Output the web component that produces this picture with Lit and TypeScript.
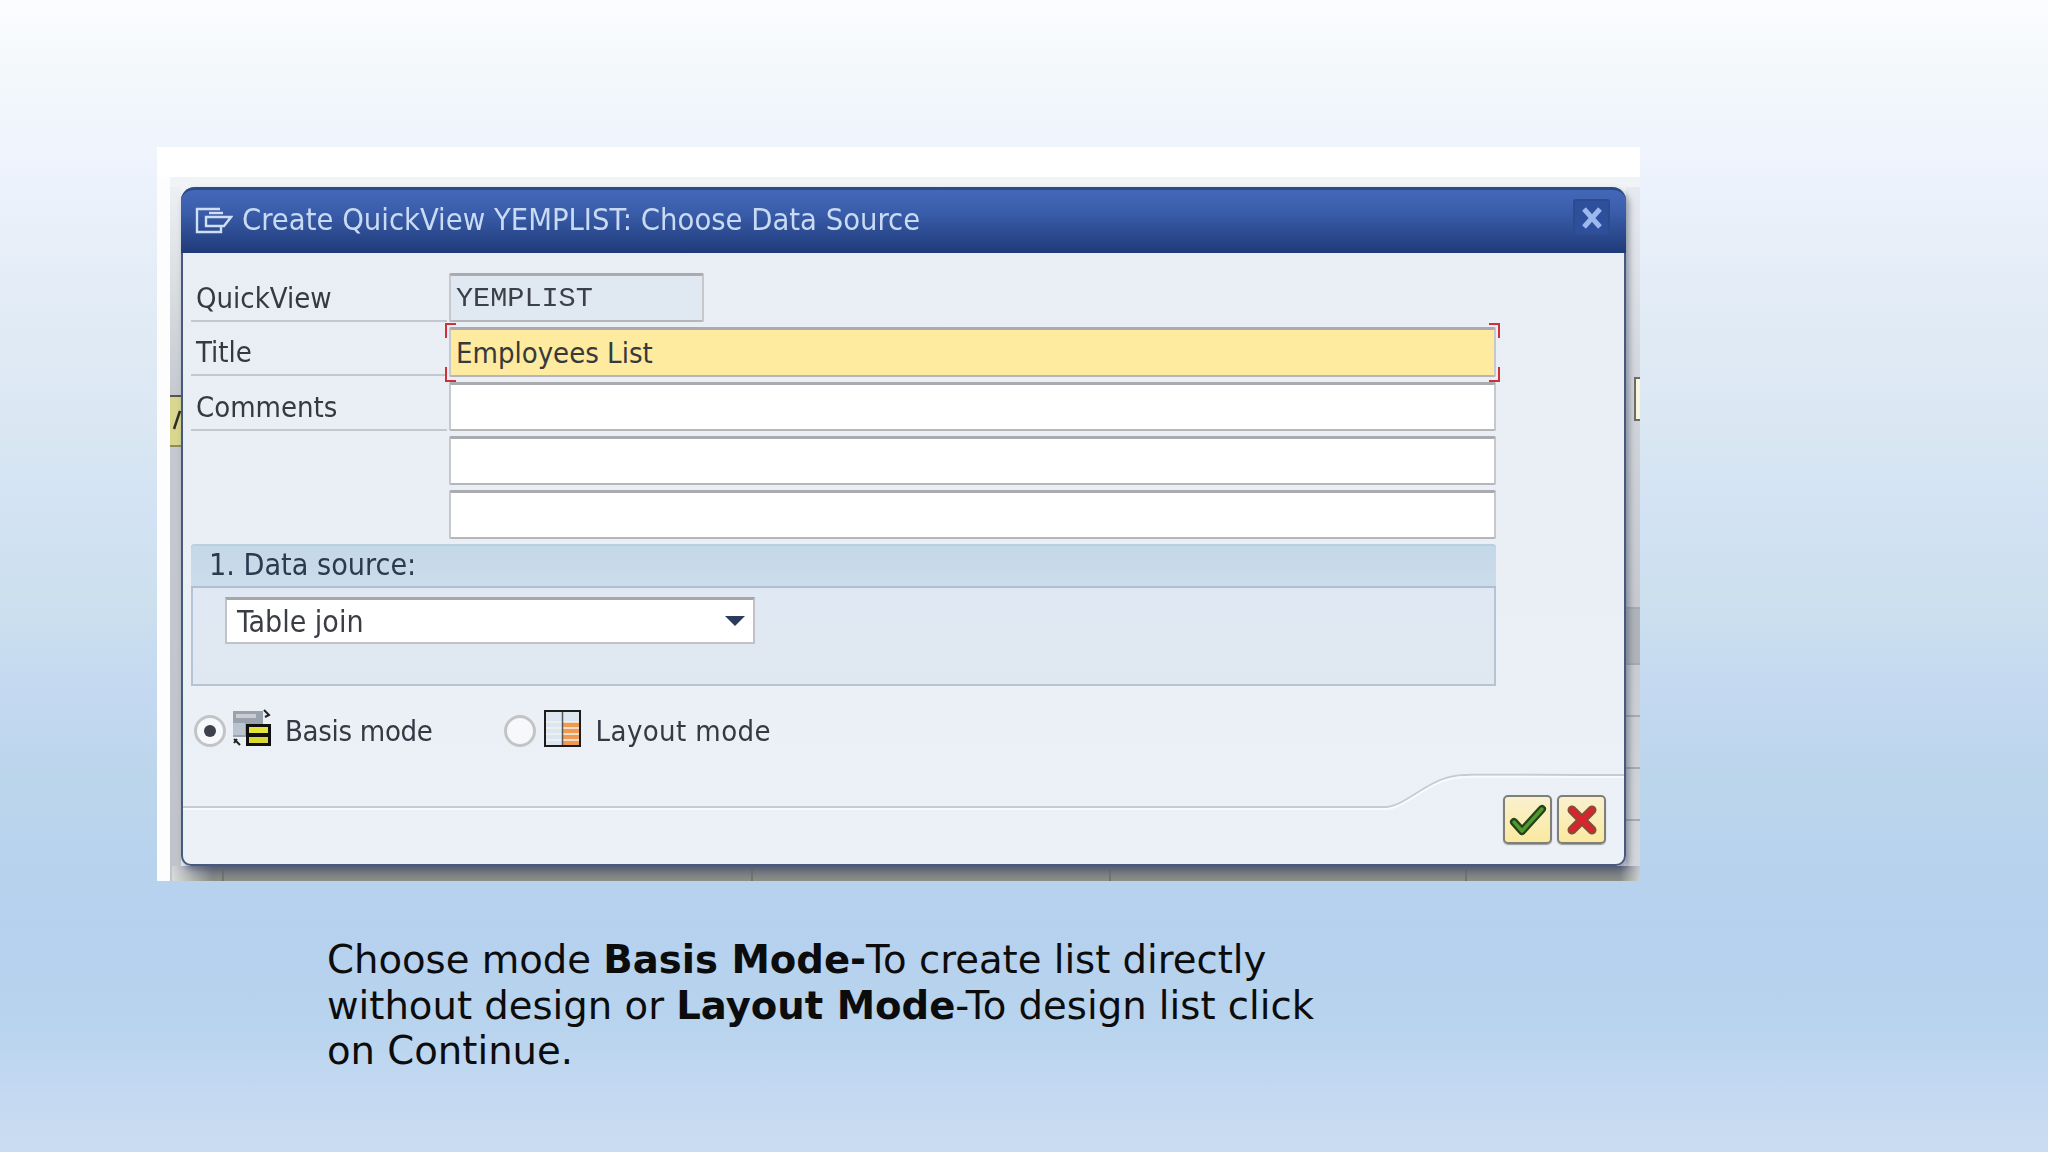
import { LitElement, html, css } from "lit";
import { customElement } from "lit/decorators.js";

const TICKS_RIGHT = [460, 516, 568, 620, 672];
const TICKS_BOTTOM = [65, 594, 952, 1308];

@customElement("app-root")
export class AppRoot extends LitElement {
  static styles = css`
    :host { display: block; width: 2048px; height: 1152px; overflow: hidden; font-family: "DejaVu Sans", sans-serif; }
    .slide { width: 2048px; height: 1152px; box-sizing: border-box; padding: 147px 0 0 157px; display: flex; flex-direction: column;
      background: linear-gradient(180deg, #fbfcff 0%, #f1f7fa 8%, #eff4fd 13%, #e3ecf7 25%, #dae7f2 37%, #d2e2f4 45%, #cce0ee 52%, #c4d9f1 60%, #bbd5eb 68%, #b5d1ef 80%, #b7d3ed 88%, #c4d9f2 95%, #cadcf0 100%); }
    .shot { position: relative; width: 1483px; height: 734px; box-sizing: border-box; padding: 40px 0 0 24px;
      background: linear-gradient(180deg, #ffffff 0, #ffffff 30px, #f1f4f7 30px, #eef2f6 100%); }
    .under { position: absolute; }
    .u-white { left: 0; top: 30px; bottom: 0; width: 13px; background: #fdfdfe; }
    .u-left { left: 13px; top: 40px; bottom: 0; width: 11px; background: linear-gradient(180deg, #eceff3 0, #c6cad0 30%, #c0c4ca 100%); }
    .u-yellow { left: 13px; top: 248px; width: 11px; height: 52px; box-sizing: border-box; background: #d9d78f; border-top: 2px solid #55564c; border-bottom: 2px solid #8f8e5a; }
    .u-yellow svg { display: block; }
    .u-right { right: 0; top: 40px; bottom: 0; width: 14px; background: linear-gradient(180deg, #e6eaf0 0, #d2d6dc 30%, #c6cad0 60%, #d4d7dc 100%); }
    .u-patch { right: 0; top: 460px; width: 14px; height: 56px; background: #b0b4ba; }
    .u-tab { right: 0; top: 230px; width: 4px; height: 40px; background: #f9f8dc; border: 2px solid #6c6e66; border-right: 0; }
    .u-tick { right: 0; width: 14px; height: 2px; background: #a6abb2; }
    .u-bottom { left: 15px; right: 0; bottom: 0; height: 15px;
      background: linear-gradient(90deg, rgba(255, 255, 255, .7) 0, rgba(255, 255, 255, 0) 40px, rgba(255, 255, 255, 0) calc(100% - 20px), rgba(255, 255, 255, .6) 100%),
        linear-gradient(180deg, #6c7088, #8a9084); }
    .u-vtick { bottom: 0; width: 2px; height: 12px; background: #70756e; }
    .dialog { position: relative; width: 1445px; height: 679px; box-sizing: border-box; border: 2px solid #46597f; border-top: 0;
      border-radius: 14px 14px 10px 10px; display: flex; flex-direction: column; filter: blur(0.6px);
      background: linear-gradient(180deg, #e8eef3 0, #ecf0f7 100%); box-shadow: 3px 4px 6px rgba(60, 70, 90, .5); }
    .title { height: 66px; margin: 0 -2px; flex: none; box-sizing: border-box; display: flex; align-items: center; padding: 0 16px 4px 14px;
      border-radius: 14px 14px 0 0; border-top: 3px solid #2c4a84; color: #c9daf3;
      background: linear-gradient(180deg, #4468b8 0, #3a5dab 35%, #1f3a78 100%); }
    .title svg { flex: none; }
    .title span { margin-left: 9px; font-size: 30.6px; font-stretch: condensed; white-space: nowrap; flex: 1; }
    .close { width: 37px; height: 37px; box-sizing: border-box; border: 2px solid #2d4a8c; border-radius: 3px; background: #2e4f9c; display: flex; align-items: center; justify-content: center; margin-bottom: 4px; }
    .form { padding: 20px 0 0 8px; width: 1305px; display: grid; grid-template-columns: 258px 1fr; row-gap: 5px; font-stretch: condensed; color: #333a44; font-size: 29px; }
    .lab { display: flex; align-items: center; height: 49px; border-bottom: 2px solid #c4c8ce; padding: 3px 0 0 5px; box-sizing: border-box; margin-right: 2px; }
    .fld { box-sizing: border-box; height: 49px; background: #fff; border: 2px solid #c6c8cc; border-top: 3px solid #a9abb0; border-bottom-color: #b4b6ba; border-radius: 2px; display: flex; align-items: center; padding-left: 5px; }
    .ro { width: 255px; background: #e0e8f2; font-family: "Liberation Mono", monospace; font-size: 28.5px; color: #3c4048; }
    .foc { position: relative; background: #feeba0; height: 50px; color: #37393a; }
    .mark { position: absolute; width: 9px; height: 13px; border: 0 solid #d0303a; }
    .tl { left: -6px; top: -7px; border-left-width: 2px; border-top-width: 2px; }
    .tr { right: -6px; top: -7px; border-right-width: 2px; border-top-width: 2px; }
    .bl { left: -6px; bottom: -7px; border-left-width: 2px; border-bottom-width: 2px; }
    .br { right: -6px; bottom: -7px; border-right-width: 2px; border-bottom-width: 2px; }
    .group { grid-column: 1 / 3; height: 142px; box-sizing: border-box; border: 2px solid #b5c4d4; border-top: 0; border-radius: 4px 4px 0 0;
      background: linear-gradient(180deg, #dfeaf4 0, #e0e7f1 100%); }
    .ghead { height: 44px; box-sizing: border-box; margin: 0 -2px; padding: 0 0 3px 18px; display: flex; align-items: center; border-top: 2px solid #b9cfe2; border-bottom: 2px solid #aebfd0; background: linear-gradient(180deg, #c5d8e8, #cbdcea); color: #2c3a50; border-radius: 4px 4px 0 0; font-size: 30.2px; }
    .sel { margin: 9px 0 0 32px; width: 530px; height: 47px; box-sizing: border-box; background: #fff; border: 2px solid #c0c2c6; border-top: 3px solid #a5a7ab; display: flex; align-items: center; justify-content: space-between; padding: 0 8px 0 10px; color: #3a3d44; font-size: 30px; }
    .arrow { width: 0; height: 0; border-left: 10px solid transparent; border-right: 10px solid transparent; border-top: 10px solid #2c3a5c; }
    .modes { display: flex; align-items: center; margin: 23px 0 0 11px; font-stretch: condensed; font-size: 29px; color: #343a44; }
    .radio { width: 32px; height: 32px; box-sizing: border-box; border: 3px solid #c2c4c6; border-radius: 50%; background: #f6f8fb; display: flex; align-items: center; justify-content: center; }
    .radio i { width: 12px; height: 12px; border-radius: 50%; background: #3c414c; }
    .modes svg { margin: 0 0 6px 6px; }
    .modes .ic2 { margin-left: 8px; }
    .modes span { margin-left: 13px; letter-spacing: -0.3px; }
    .modes .t2 { margin-left: 15px; letter-spacing: 0.4px; }
    .m2 { margin-left: 71px; }
    .foot { position: absolute; left: 0; right: 0; bottom: 19px; height: 95px; pointer-events: none; }
    .btns { position: absolute; right: 18px; bottom: 20px; display: flex; gap: 5px; }
    .btn { width: 49px; height: 49px; box-sizing: border-box; border: 2px solid #7f7f78; border-radius: 5px; background: linear-gradient(180deg, #f9f1cf, #fbe9a0); display: flex; align-items: center; justify-content: center; box-shadow: 0 1px 1px #9a9a9a; }
    .caption { margin: 56px 0 0 170px; width: 1010px; font-size: 38.6px; line-height: 45.5px; color: #0c0c0c; }
    b { font-weight: 700; }
  `;

  render() {
    return html`<div class="slide">
      <div class="shot">
        <div class="under u-white"></div>
        <div class="under u-left"></div>
        <div class="under u-yellow"><svg width="11" height="48" viewBox="0 0 11 48"><path d="M4 32L10 14" stroke="#2e2e26" stroke-width="2.5" fill="none"/></svg></div>
        <div class="under u-right"></div>
        <div class="under u-patch"></div>
        <div class="under u-tab"></div>
        ${TICKS_RIGHT.map((t) => html`<div class="under u-tick" style="top:${t}px"></div>`)}
        <div class="under u-bottom"></div>
        ${TICKS_BOTTOM.map((l) => html`<div class="under u-vtick" style="left:${l}px"></div>`)}
        <div class="dialog">
          <div class="title">
            <svg width="38" height="28" viewBox="0 0 38 28" fill="none" stroke="#cfe0f6" stroke-width="2.4">
              <path d="M25 3H2V26H26V20" />
              <path d="M11 11H36L29 20H11Z" />
              <path d="M14 7H28" />
            </svg>
            <span>Create QuickView YEMPLIST: Choose Data Source</span>
            <div class="close">
              <svg width="22" height="22" viewBox="0 0 22 22"><path d="M3 2L19 20M19 2L3 20" stroke="#9db8ee" stroke-width="5" fill="none"/></svg>
            </div>
          </div>
          <div class="form">
            <div class="lab">QuickView</div><div class="fld ro">YEMPLIST</div>
            <div class="lab">Title</div>
            <div class="fld foc">Employees List<i class="mark tl"></i><i class="mark tr"></i><i class="mark bl"></i><i class="mark br"></i></div>
            <div class="lab">Comments</div><div class="fld"></div>
            <div></div><div class="fld"></div>
            <div></div><div class="fld"></div>
            <div class="group">
              <div class="ghead">1. Data source:</div>
              <div class="sel">Table join<i class="arrow"></i></div>
            </div>
          </div>
          <div class="modes">
            <div class="radio"><i></i></div>
            <svg width="40" height="38" viewBox="0 0 40 38">
              <rect x="1" y="2" width="30" height="26" fill="#9aa3ad"/>
              <rect x="4" y="5" width="20" height="4" fill="#c8ced4"/>
              <rect x="1" y="14" width="12" height="12" fill="#b9c4d0"/>
              <rect x="14" y="15" width="25" height="22" fill="#101010"/>
              <rect x="17" y="18" width="19" height="6" fill="#e4e43a"/>
              <rect x="17" y="28" width="19" height="6" fill="#d8d830"/>
              <path d="M32 1L37 6L33 8" fill="none" stroke="#222" stroke-width="2"/>
              <path d="M2 30L8 36M2 34L5 30" fill="none" stroke="#222" stroke-width="2"/>
            </svg>
            <span>Basis mode</span>
            <div class="radio m2"></div>
            <svg class="ic2" width="37" height="37" viewBox="0 0 37 37">
              <rect x="1" y="1" width="35" height="35" fill="#dce6f0" stroke="#1c1c1c" stroke-width="2"/>
              <rect x="19" y="12" width="16" height="23" fill="#ee9a52"/>
              <path d="M2 12H35M2 18H35M2 24H35M2 30H35" stroke="#f4f4f0" stroke-width="1.6"/>
              <path d="M18.5 2V35" stroke="#555" stroke-width="1.5"/>
            </svg>
            <span class="t2">Layout mode</span>
          </div>
          <svg class="foot" viewBox="0 0 1441 95" preserveAspectRatio="none" fill="none">
            <path d="M0 57H1204C1224 55 1244 30 1272 26C1282 24 1300 25 1441 25" stroke="#c6cad2" stroke-width="2"/>
            <path d="M0 59H1204C1224 57 1244 32 1272 28C1282 26 1300 27 1441 27" stroke="#f8fafc" stroke-width="2"/>
          </svg>
          <div class="btns">
            <div class="btn">
              <svg width="40" height="38" viewBox="0 0 40 38"><path d="M6 21L14 30L34 8" fill="none" stroke="#26401a" stroke-width="8" stroke-linecap="round" stroke-linejoin="round"/><path d="M6 21L14 30L34 8" fill="none" stroke="#4f9a2c" stroke-width="3.5" stroke-linecap="round" stroke-linejoin="round"/></svg>
            </div>
            <div class="btn">
              <svg width="36" height="36" viewBox="0 0 36 36"><path d="M8 8L28 28M28 8L8 28" stroke="#8a4a3a" stroke-width="9" stroke-linecap="round"/><path d="M8 8L28 28M28 8L8 28" stroke="#e0202c" stroke-width="4.5" stroke-linecap="round"/></svg>
            </div>
          </div>
        </div>
      </div>
      <div class="caption">Choose mode <b>Basis Mode-</b>To create list directly without design or <b>Layout Mode</b>-To design list click on Continue.</div>
    </div>`;
  }
}
